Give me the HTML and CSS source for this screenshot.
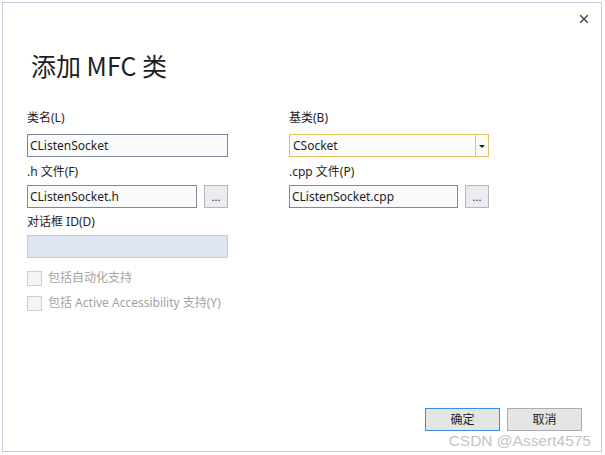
FILE: index.html
```html
<!DOCTYPE html>
<html lang="zh-CN">
<head>
<meta charset="utf-8">
<title>添加 MFC 类</title>
<link rel="stylesheet" href="styles.css">
</head>
<body>
<div class="dialog">
  <div class="titlebar">
    <svg class="close" width="10" height="10" viewBox="0 0 10 10"><path d="M1.2 1.2 L8.8 8.8 M8.8 1.2 L1.2 8.8" stroke="#4a4a4a" stroke-width="1.6" fill="none"/></svg>
  </div>
  <h1 class="title">添加 MFC 类</h1>
  <div class="form">
    <label class="lbl r1">类名(L)</label>
    <label class="lbl r1">基类(B)</label>
    <div class="field r2"><div class="input">CListenSocket</div></div>
    <div class="field r2"><div class="combo"><span class="combo-text">CSocket</span><span class="combo-btn"><span class="arrow"></span></span></div></div>
    <label class="lbl r3">.h 文件(F)</label>
    <label class="lbl r3">.cpp 文件(P)</label>
    <div class="field row r4"><div class="input grow">CListenSocket.h</div><div class="browse">...</div></div>
    <div class="field row r4"><div class="input grow">CListenSocket.cpp</div><div class="browse">...</div></div>
    <label class="lbl r5 left">对话框 ID(D)</label>
    <div class="field r6 left"><div class="input disabled"></div></div>
    <div class="check r7 left"><span class="box"></span><span class="ctext">包括自动化支持</span></div>
    <div class="check r8 left"><span class="box"></span><span class="ctext">包括 Active Accessibility 支持(Y)</span></div>
  </div>
  <div class="footer">
    <button class="btn primary">确定</button>
    <button class="btn">取消</button>
  </div>
  <div class="watermark">CSDN @Assert4575</div>
</div>
</body>
</html>
```
FILE: styles.css
```css
html, body {
  margin: 0;
  padding: 0;
  background: #ffffff;
}
body {
  width: 605px;
  height: 455px;
  overflow: hidden;
  font-family: "Noto Sans", "Noto Sans CJK SC", sans-serif;
  font-size: 12px;
  color: #1e1e1e;
}
.dialog {
  position: relative;
  margin: 2px 0 0 2px;
  width: 598px;
  height: 448px;
  border: 1px solid #cbc9dc;
  display: flex;
  flex-direction: column;
  background: #ffffff;
}
.titlebar {
  display: flex;
  justify-content: flex-end;
  padding: 11px 12px 0 0;
  height: 10px;
}
.close { display: block; }
.title {
  margin: 24px 0 0 28px;
  font-family: "Noto Sans CJK SC", sans-serif;
  font-weight: 400;
  font-size: 25px;
  line-height: 34px;
  color: #1e1e1e;
}
.form {
  display: grid;
  grid-template-columns: 201px 200px;
  column-gap: 61px;
  padding-left: 24px;
  margin-top: 28px;
  align-items: start;
}
.left { grid-column: 1; }
.lbl {
  display: block;
  line-height: 16px;
  height: 16px;
  white-space: nowrap;
}
.r2 { margin-top: 8px; }
.r3 { margin-top: 7px; }
.r4 { margin-top: 5px; }
.r5 { margin-top: 6px; }
.r6 { margin-top: 5px; }
.r7 { margin-top: 12px; }
.r8 { margin-top: 9px; }
.field { height: 23px; }
.row { display: flex; gap: 7px; }
.input {
  box-sizing: border-box;
  height: 23px;
  border: 1px solid #7d899b;
  background: #fafafa;
  padding: 0 2px;
  line-height: 21px;
  white-space: nowrap;
  overflow: hidden;
}
.input.grow { flex: 1; }
.input.disabled {
  background: #dfe6f1;
  border-color: #c5ccd8;
}
.browse {
  box-sizing: border-box;
  width: 24px;
  height: 23px;
  border: 1px solid #b6b6b8;
  background: #ececf0;
  text-align: center;
  line-height: 22px;
  font-size: 11px;
}
.combo {
  box-sizing: border-box;
  height: 23px;
  border: 1px solid #e6c262;
  background: #fcfcfc;
  display: flex;
}
.combo-text {
  flex: 1;
  padding: 0 3px;
  line-height: 21px;
}
.combo-btn {
  width: 12px;
  border-left: 1px solid #e6c262;
  display: flex;
  align-items: center;
  justify-content: center;
}
.arrow {
  width: 0;
  height: 0;
  border-left: 3px solid transparent;
  border-right: 3px solid transparent;
  border-top: 3px solid #1e1e1e;
  margin-top: 1px;
}
.check {
  display: flex;
  align-items: center;
  height: 16px;
  white-space: nowrap;
}
.box {
  box-sizing: border-box;
  width: 15px;
  height: 15px;
  border: 1px solid #cfcfcf;
  background: #f4f4f4;
  margin-right: 6px;
}
.ctext { color: #a2a2a2; line-height: 16px; }
.footer {
  margin-top: auto;
  display: flex;
  justify-content: flex-end;
  gap: 7px;
  padding: 0 19px 20px 0;
}
.btn {
  box-sizing: border-box;
  width: 75px;
  height: 23px;
  margin: 0;
  padding: 0;
  border: 1px solid #adadad;
  background: #e5e5e5;
  font-family: "Noto Sans", "Noto Sans CJK SC", sans-serif;
  font-size: 12px;
  color: #1e1e1e;
  line-height: 21px;
}
.btn.primary { border-color: #3a8ee6; }
.watermark {
  position: absolute;
  right: 10px;
  bottom: 1px;
  font-family: "Liberation Sans", Arial, sans-serif;
  font-size: 15.5px;
  line-height: 18px;
  color: #c4c4c4;
  white-space: nowrap;
}
```
